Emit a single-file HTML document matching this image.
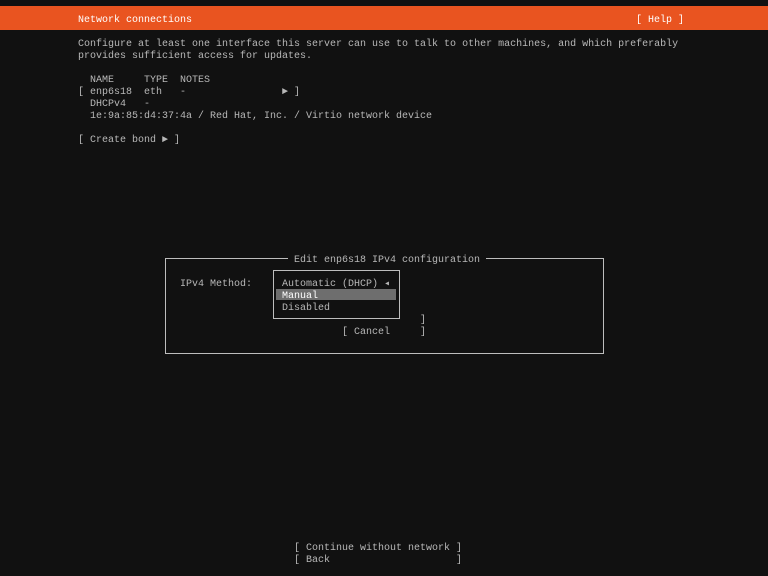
<!DOCTYPE html>
<html><head><meta charset="utf-8"><style>
body{margin:0;background:#111;width:768px;height:576px;overflow:hidden;position:relative;font-family:"Liberation Mono",monospace;font-size:10px;color:#b8b8b8}
.t{position:absolute;white-space:pre;line-height:12px;height:12px;margin-top:3px}
.bar{position:absolute;left:0;top:6px;width:768px;height:24px;background:#e95420}
.box{position:absolute;border:1px solid #bdbdbd}
</style></head><body>
<div class="bar"></div>
<div class="t" style="left:78px;top:12px;color:#fff">Network connections</div>
<div class="t" style="left:636px;top:12px;color:#fff">[ Help ]</div>
<div class="t" style="left:78px;top:36px">Configure at least one interface this server can use to talk to other machines, and which preferably</div>
<div class="t" style="left:78px;top:48px">provides sufficient access for updates.</div>
<div class="t" style="left:78px;top:72px">  NAME     TYPE  NOTES</div>
<div class="t" style="left:78px;top:84px">[ enp6s18  eth   -                ► ]</div>
<div class="t" style="left:78px;top:96px">  DHCPv4   -</div>
<div class="t" style="left:78px;top:108px">  1e:9a:85:d4:37:4a / Red Hat, Inc. / Virtio network device</div>
<div class="t" style="left:78px;top:132px">[ Create bond ► ]</div>

<div class="box" style="left:165px;top:258px;width:437px;height:94px"></div>
<div class="t" style="left:288px;top:252px;background:#111;height:10px"> Edit enp6s18 IPv4 configuration </div>
<div class="t" style="left:180px;top:276px">IPv4 Method:</div>
<div class="t" style="left:420px;top:312px">]</div>
<div class="t" style="left:342px;top:324px">[ Cancel     ]</div>
<div class="box" style="left:273px;top:270px;width:125px;height:47px;background:#111"></div>
<div style="position:absolute;left:276px;top:289px;width:120px;height:11px;background:#6e6e6e"></div>
<div class="t" style="left:282px;top:276px">Automatic (DHCP) ◂</div>
<div class="t" style="left:282px;top:288px;color:#fff">Manual</div>
<div class="t" style="left:282px;top:300px">Disabled</div>

<div class="t" style="left:294px;top:540px">[ Continue without network ]</div>
<div class="t" style="left:294px;top:552px">[ Back                     ]</div>
</body></html>
